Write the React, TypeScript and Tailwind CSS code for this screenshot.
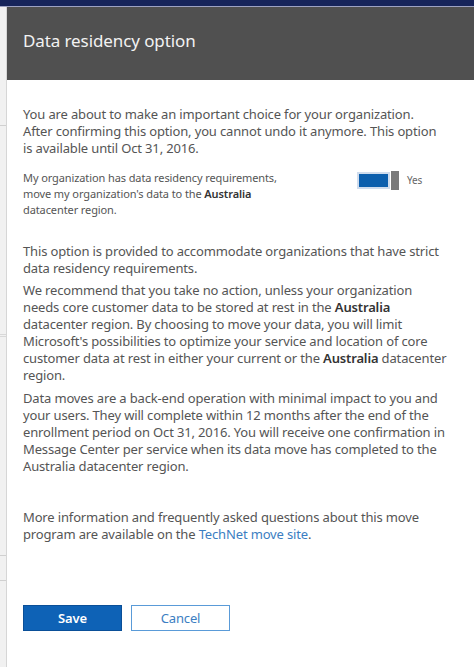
import React from "react";

const B = ({ children }: { children: React.ReactNode }) => (
  <span className="font-semibold text-[#333]">{children}</span>
);

export default function App() {
  return (
    <div className="w-[474px] h-[667px] overflow-hidden bg-white flex flex-col font-['Noto_Sans',sans-serif]">
      <div className="h-[6px] bg-[#16245a] shrink-0" />
      <div className="h-px bg-[#9da2c2] shrink-0" />
      <div className="flex flex-1 min-h-0">
        <div className="w-[7px] bg-[#f1f1f1] border-r border-[#d6d6d6] shrink-0 flex flex-col">
          <div className="mt-[118px] h-px bg-[#d0d0d0]" />
          <div className="mt-[208px] h-[3px] border-y border-[#d8d8d8]" />
          <div className="mt-[218px] h-px bg-[#d0d0d0]" />
          <div className="mt-[24px] h-px bg-[#d0d0d0]" />
        </div>
        <div className="flex-1 flex flex-col">
          <div className="h-[73px] bg-[#505050] flex items-center px-4 shrink-0">
            <h1 className="text-[17px] text-[#f2f2f2] tracking-[-0.1px] mb-[6px]">Data residency option</h1>
          </div>
          <div className="px-4 pt-[26px] text-[13px] leading-[17px] text-[#555] tracking-[-0.15px]">
            <p>
              You are about to make an important choice for your organization.
              <br />
              After confirming this option, you cannot undo it anymore. This option
              <br />
              is available until Oct 31, 2016.
            </p>
            <div className="flex items-start mt-[13px]">
              <p className="text-[11px] leading-[16px] w-[334px] tracking-[-0.1px]">
                My organization has data residency requirements,
                <br />
                move my organization's data to the <B>Australia</B>
                <br />
                datacenter region.
              </p>
              <div className="flex items-center mt-[1px]">
                <div className="w-[33px] h-[17px] bg-[#cfdced] p-[2px] flex">
                  <div className="flex-1 bg-[#0c5fad]" />
                </div>
                <div className="w-[8px] h-[19px] bg-[#7a7a7a] ml-[1px]" />
                <span className="ml-[8px] text-[10px] text-[#666]">Yes</span>
              </div>
            </div>
            <p className="mt-[25px]">
              This option is provided to accommodate organizations that have strict
              <br />
              data residency requirements.
            </p>
            <p className="mt-[5px]">
              We recommend that you take no action, unless your organization
              <br />
              needs core customer data to be stored at rest in the <B>Australia</B>
              <br />
              datacenter region. By choosing to move your data, you will limit
              <br />
              Microsoft's possibilities to optimize your service and location of core
              <br />
              customer data at rest in either your current or the <B>Australia</B> datacenter
              <br />
              region.
            </p>
            <p className="mt-[6px]">
              Data moves are a back-end operation with minimal impact to you and
              <br />
              your users. They will complete within 12 months after the end of the
              <br />
              enrollment period on Oct 31, 2016. You will receive one confirmation in
              <br />
              Message Center per service when its data move has completed to the
              <br />
              Australia datacenter region.
            </p>
            <p className="mt-[34px]">
              More information and frequently asked questions about this move
              <br />
              program are available on the <span className="text-[#3b7ec2]">TechNet move site</span>.
            </p>
            <div className="flex gap-[9px] mt-[62px]">
              <button className="w-[99px] h-[26px] bg-[#0e62b6] text-white text-[13px] font-semibold border border-[#0a4f98]">
                Save
              </button>
              <button className="w-[99px] h-[26px] bg-white text-[#3b7ec2] text-[13px] border border-[#5a9bd8]">
                Cancel
              </button>
            </div>
          </div>
        </div>
      </div>
    </div>
  );
}
